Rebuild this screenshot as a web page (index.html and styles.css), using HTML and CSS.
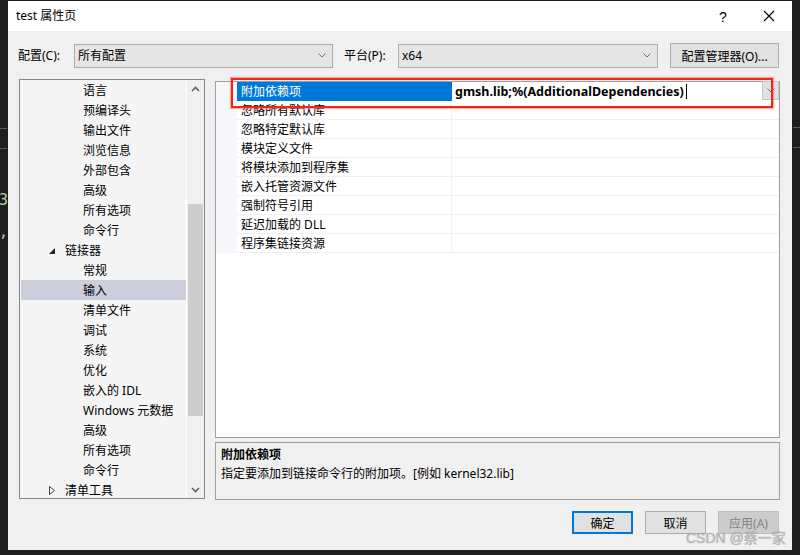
FILE: index.html
```html
<!DOCTYPE html>
<html lang="zh-CN">
<head>
<meta charset="utf-8">
<title>test 属性页</title>
<link rel="stylesheet" href="styles.css">
</head>
<body>
<div class="bg-mark m1"></div>
<div class="bg-mark m2"></div>
<div class="bg-mark m3"></div>
<div class="bg-mark m4"></div>
<span class="bg-code c1">3</span>
<span class="bg-code c2">,</span>

<div class="dialog">
  <div class="titlebar">
    <div class="title">test 属性页</div>
    <div class="tb-btn help">?</div>
    <div class="tb-btn close">
      <svg width="12" height="12" viewBox="0 0 12 12"><path d="M1 1 L11 11 M11 1 L1 11" stroke="#000" stroke-width="1.1" fill="none"/></svg>
    </div>
  </div>

  <div class="toolbar">
    <span class="lbl lbl-conf">配置(C):</span>
    <div class="combo combo-conf">
      <span class="combo-text">所有配置</span>
      <svg class="chev" width="8" height="5" viewBox="0 0 8 5"><path d="M0.5 0.5 L4 4 L7.5 0.5" stroke="#707070" stroke-width="1" fill="none"/></svg>
    </div>
    <span class="lbl lbl-plat">平台(P):</span>
    <div class="combo combo-plat">
      <span class="combo-text">x64</span>
      <svg class="chev" width="8" height="5" viewBox="0 0 8 5"><path d="M0.5 0.5 L4 4 L7.5 0.5" stroke="#707070" stroke-width="1" fill="none"/></svg>
    </div>
    <div class="btn btn-mgr">配置管理器(O)...</div>
  </div>

  <div class="main">
    <div class="tree">
      <div class="tree-list">
        <div class="ti l3">语言</div>
        <div class="ti l3">预编译头</div>
        <div class="ti l3">输出文件</div>
        <div class="ti l3">浏览信息</div>
        <div class="ti l3">外部包含</div>
        <div class="ti l3">高级</div>
        <div class="ti l3">所有选项</div>
        <div class="ti l3">命令行</div>
        <div class="ti l2"><svg class="tri" width="6" height="6" viewBox="0 0 6 6"><polygon points="6,0 6,6 0,6" fill="#262626"/></svg>链接器</div>
        <div class="ti l3">常规</div>
        <div class="ti l3 sel">输入</div>
        <div class="ti l3">清单文件</div>
        <div class="ti l3">调试</div>
        <div class="ti l3">系统</div>
        <div class="ti l3">优化</div>
        <div class="ti l3">嵌入的 IDL</div>
        <div class="ti l3">Windows 元数据</div>
        <div class="ti l3">高级</div>
        <div class="ti l3">所有选项</div>
        <div class="ti l3">命令行</div>
        <div class="ti l2"><svg class="tri" width="6" height="9" viewBox="0 0 6 9"><polygon points="0.5,0.5 5.5,4.5 0.5,8.5" fill="none" stroke="#404040" stroke-width="1"/></svg>清单工具</div>
      </div>
      <div class="vscroll">
        <div class="sb-arrow">
          <svg width="9" height="6" viewBox="0 0 9 6"><path d="M1 5 L4.5 1.5 L8 5" stroke="#606060" stroke-width="1.6" fill="none"/></svg>
        </div>
        <div class="sb-track"><div class="sb-thumb"></div></div>
        <div class="sb-arrow">
          <svg width="9" height="6" viewBox="0 0 9 6"><path d="M1 1 L4.5 4.5 L8 1" stroke="#606060" stroke-width="1.6" fill="none"/></svg>
        </div>
      </div>
    </div>

    <div class="right">
      <div class="grid">
        <div class="rows">
          <div class="gut"></div><div class="nm nm-sel">附加依赖项</div><div class="val val-edit"><span class="val-text">gmsh.lib;%(AdditionalDependencies)</span><span class="caret"></span><span class="dd"><svg width="8" height="5" viewBox="0 0 8 5"><path d="M0.5 0.5 L4 4 L7.5 0.5" stroke="#707070" stroke-width="1" fill="none"/></svg></span></div>
          <div class="gut"></div><div class="nm">忽略所有默认库</div><div class="val"></div>
          <div class="gut"></div><div class="nm">忽略特定默认库</div><div class="val"></div>
          <div class="gut"></div><div class="nm">模块定义文件</div><div class="val"></div>
          <div class="gut"></div><div class="nm">将模块添加到程序集</div><div class="val"></div>
          <div class="gut"></div><div class="nm">嵌入托管资源文件</div><div class="val"></div>
          <div class="gut"></div><div class="nm">强制符号引用</div><div class="val"></div>
          <div class="gut"></div><div class="nm">延迟加载的 DLL</div><div class="val"></div>
          <div class="gut"></div><div class="nm">程序集链接资源</div><div class="val"></div>
        </div>
        <div class="redbox"></div>
      </div>
      <div class="desc">
        <div class="desc-title">附加依赖项</div>
        <div class="desc-text">指定要添加到链接命令行的附加项。[例如 kernel32.lib]</div>
      </div>
    </div>
  </div>

  <div class="footer">
    <div class="btn fbtn ok">确定</div>
    <div class="btn fbtn">取消</div>
    <div class="btn fbtn disabled">应用(A)</div>
  </div>
</div>

<div class="watermark">CSDN @蔡一家</div>
</body>
</html>
```

FILE: styles.css
```css
* { box-sizing: border-box; }

body {
  margin: 0;
  width: 800px;
  height: 555px;
  overflow: hidden;
  position: relative;
  background: #1e1e1e;
  font-family: "Noto Sans", "Noto Sans CJK SC", sans-serif;
  font-size: 12px;
  color: #000;
}

.bg-mark {
  position: absolute;
  height: 1px;
  background: #5a5a5a;
}
.m1 { left: 0; top: 128px; width: 7px; }
.m2 { left: 0; top: 148px; width: 7px; }
.m3 { left: 793px; top: 127px; width: 7px; }
.m4 { left: 793px; top: 147px; width: 7px; }

.bg-code {
  position: absolute;
  left: -1px;
  font-family: "DejaVu Sans Mono", monospace;
  font-size: 15px;
  color: #b5cea8;
  line-height: 16px;
}
.c1 { top: 192px; }
.c2 { top: 224px; color: #c8c8c8; }

.dialog {
  margin: 1px 0 0 8px;
  width: 784px;
  height: 549px;
  background: #f0f0f0;
  display: flex;
  flex-direction: column;
}

/* title bar */
.titlebar {
  height: 30px;
  background: #fff;
  display: flex;
  align-items: center;
}
.title {
  flex: 1;
  padding-left: 8px;
  font-size: 12px;
  line-height: 30px;
}
.tb-btn {
  width: 46px;
  height: 30px;
  display: flex;
  align-items: center;
  justify-content: center;
}
.help {
  font-family: "Liberation Sans", sans-serif;
  font-size: 14px;
  padding-top: 1px;
}

/* toolbar */
.toolbar {
  margin-top: 12px;
  height: 25px;
  display: flex;
  align-items: center;
  padding-left: 10px;
}
.lbl { line-height: 24px; }
.lbl-conf { width: 56px; }
.lbl-plat { width: 54px; margin-left: 11px; }
.combo {
  height: 24px;
  border: 1px solid #adadad;
  background: #e5e5e5;
  display: flex;
  align-items: center;
  padding: 0 6px 0 3px;
}
.combo-conf { width: 259px; }
.combo-plat { width: 260px; }
.combo-text { flex: 1; line-height: 22px; }
.chev { flex: none; }

.btn {
  border: 1px solid #adadad;
  background: #e1e1e1;
  display: flex;
  align-items: center;
  justify-content: center;
}
.btn-mgr {
  margin-left: 12px;
  width: 109px;
  height: 25px;
}

/* main */
.main {
  margin-top: 11px;
  display: flex;
  padding-left: 11px;
  height: 421px;
}

.tree {
  width: 186px;
  height: 420px;
  border: 1px solid #828790;
  display: flex;
  background: #f5f5f5;
  overflow: hidden;
}
.tree-list {
  width: 166px;
  margin-right: 1px;
  overflow: hidden;
}
.ti {
  height: 20px;
  line-height: 18px;
  padding-top: 2px;
  white-space: nowrap;
  display: flex;
  align-items: center;
}
.l3 { padding-left: 63px; }
.l2 { padding-left: 29px; }
.tri { margin-right: 10px; flex: none; margin-top: -1px; }
.sel { background: #cccedb; margin-left: 1px; padding-left: 62px; }

.vscroll {
  background: #f0f0f0;
  display: flex;
  flex-direction: column;
  border-left: 1px solid #fff;
  margin-left: -1px;
  width: 18px;
}
.sb-arrow {
  height: 17px;
  display: flex;
  align-items: center;
  justify-content: center;
}
.sb-track {
  flex: 1;
  padding-top: 107px;
}
.sb-thumb {
  margin-left: 1px;
  width: 15px;
  height: 212px;
  background: #cdcdcd;
}

.right {
  margin-left: 10px;
  width: 565px;
  display: flex;
  flex-direction: column;
}
.grid {
  margin-top: 2px;
  height: 357px;
  border: 1px solid #a0a0a0;
  background: #fff;
  position: relative;
}
.rows {
  display: grid;
  grid-template-columns: 21px 215px 1fr;
  grid-auto-rows: 19px;
}
.gut { background: #f5f7fb; }
.nm {
  border-bottom: 1px solid #f0f0f0;
  border-right: 1px solid #f0f0f0;
  padding-left: 4px;
  padding-top: 2px;
  line-height: 16px;
  white-space: nowrap;
}
.nm-sel {
  background: #0078d7;
  color: #fff;
  border-color: #0078d7;
}
.val {
  border-bottom: 1px solid #f0f0f0;
}
.val-edit {
  display: flex;
  align-items: center;
  padding-left: 3px;
  border-bottom-color: #fff;
}
.val-text {
  font-weight: bold;
  font-size: 12.5px;
  white-space: nowrap;
  padding-top: 1px;
}
.caret {
  width: 1px;
  height: 15px;
  background: #000;
  margin-left: 2px;
}
.dd {
  margin-left: auto;
  width: 17px;
  height: 19px;
  background: #e1e1e1;
  border: 1px solid #c8c8c8;
  display: flex;
  align-items: center;
  justify-content: center;
  align-self: flex-start;
  margin-top: -1px;
}

.redbox {
  position: absolute;
  left: 15px;
  top: -4px;
  width: 542px;
  height: 30px;
  border: 2px solid #f3251a;
  box-shadow: 0 0 1px 1px rgba(255, 110, 90, 0.55);
}

.desc {
  margin-top: 4px;
  height: 58px;
  border: 1px solid #a0a0a0;
  background: #f0f0f0;
  padding: 2px 5px 0;
}
.desc-title { font-weight: bold; line-height: 19px; }
.desc-text { line-height: 19px; }

/* footer */
.footer {
  margin-top: 11px;
  display: flex;
  justify-content: flex-end;
  gap: 12px;
  padding-right: 13px;
}
.fbtn {
  width: 61px;
  height: 23px;
}
.ok { border: 2px solid #0078d7; }
.disabled {
  background: #cccccc;
  border-color: #bfbfbf;
  color: #838383;
}

.watermark {
  position: absolute;
  left: 686px;
  top: 529px;
  font-family: "Liberation Sans", "Noto Sans CJK SC", sans-serif;
  font-size: 14px;
  line-height: 18px;
  color: rgba(190, 190, 190, 0.85);
  text-shadow: 0 0 1px rgba(90, 90, 90, 0.6);
}
```
